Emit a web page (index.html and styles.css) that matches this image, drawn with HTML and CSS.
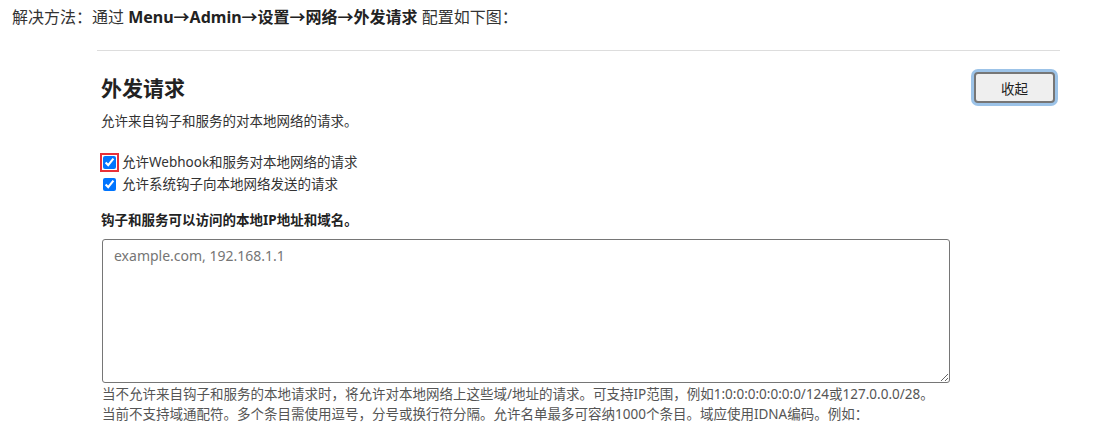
FILE: index.html
```html
<!DOCTYPE html>
<html lang="zh-CN">
<head>
    <meta charset="UTF-8">
    <meta name="viewport" content="width=device-width, initial-scale=1.0">
    <title>外发请求</title>
    <link rel="stylesheet" href="styles.css">
</head>
<body>

    <p class="intro">解决方法：通过 <b>Menu→Admin→设置→网络→外发请求</b> 配置如下图：</p>

    <div class="panel">
        <div class="panel-head">
            <h2>外发请求</h2>
            <button class="collapse-btn" type="button">收起</button>
        </div>
        <p class="desc">允许来自钩子和服务的对本地网络的请求。</p>

        <label class="check-row first">
            <input type="checkbox" class="marked" checked>
            允许Webhook和服务对本地网络的请求
        </label>
        <label class="check-row">
            <input type="checkbox" checked>
            允许系统钩子向本地网络发送的请求
        </label>

        <div class="field-label">钩子和服务可以访问的本地IP地址和域名。</div>
        <textarea class="hosts" placeholder="example.com, 192.168.1.1"></textarea>
        <p class="help">当不允许来自钩子和服务的本地请求时，将允许对本地网络上这些域/地址的请求。可支持IP范围，例如1:0:0:0:0:0:0:0/124或127.0.0.0/28。<br>当前不支持域通配符。多个条目需使用逗号，分号或换行符分隔。允许名单最多可容纳1000个条目。域应使用IDNA编码。例如：</p>
    </div>

</body>
</html>
```

FILE: styles.css
```css
body {
    margin: 0;
    padding: 0;
    font-family: "Noto Sans", "Noto Sans CJK SC", sans-serif;
    color: #333;
    background: #fff;
    overflow: hidden;
}

.intro {
    margin: 0;
    padding: 7px 12px 0;
    font-size: 16px;
    line-height: 20px;
}

.intro b {
    color: #222;
}

.panel {
    margin: 23px 0 0 97px;
    width: 954px;
    border-top: 1px solid #ddd;
    padding: 21px 5px 0 4px;
}

.panel-head {
    display: flex;
    justify-content: space-between;
    align-items: flex-start;
}

.panel-head h2 {
    margin: 2px 0 0;
    font-size: 21px;
    line-height: 28px;
    font-weight: bold;
    color: #222;
}

.collapse-btn {
    width: 81px;
    height: 31px;
    margin: 0;
    padding: 0;
    font-family: inherit;
    font-size: 13.5px;
    color: #222;
    background: #efefef;
    border: 2px solid #767676;
    border-radius: 4px;
    box-shadow: 0 0 0 3px #9cc3e8;
}

.desc {
    margin: 8px 0 0;
    font-size: 13.5px;
    line-height: 20px;
}

.check-row {
    display: flex;
    align-items: center;
    font-size: 13.5px;
    line-height: 22px;
}

.check-row.first {
    margin-top: 20px;
}

.check-row input {
    width: 13px;
    height: 13px;
    margin: 0 6px 0 2px;
    accent-color: #0075ff;
}

.check-row input.marked {
    outline: 2px solid #e8313a;
    outline-offset: 1px;
}

.field-label {
    margin-top: 15px;
    font-size: 13.5px;
    line-height: 20px;
    font-weight: bold;
    color: #222;
}

.hosts {
    display: block;
    box-sizing: border-box;
    width: 848px;
    height: 144px;
    margin: 9px 0 0 1px;
    padding: 6px 11px;
    font-family: inherit;
    font-size: 14px;
    line-height: 20px;
    border: 1px solid #767676;
    border-radius: 3px;
}

.hosts::placeholder {
    color: #757575;
}

.help {
    margin: 1px 0 0 1px;
    font-size: 13.5px;
    line-height: 20px;
    color: #555;
    white-space: nowrap;
}
```
